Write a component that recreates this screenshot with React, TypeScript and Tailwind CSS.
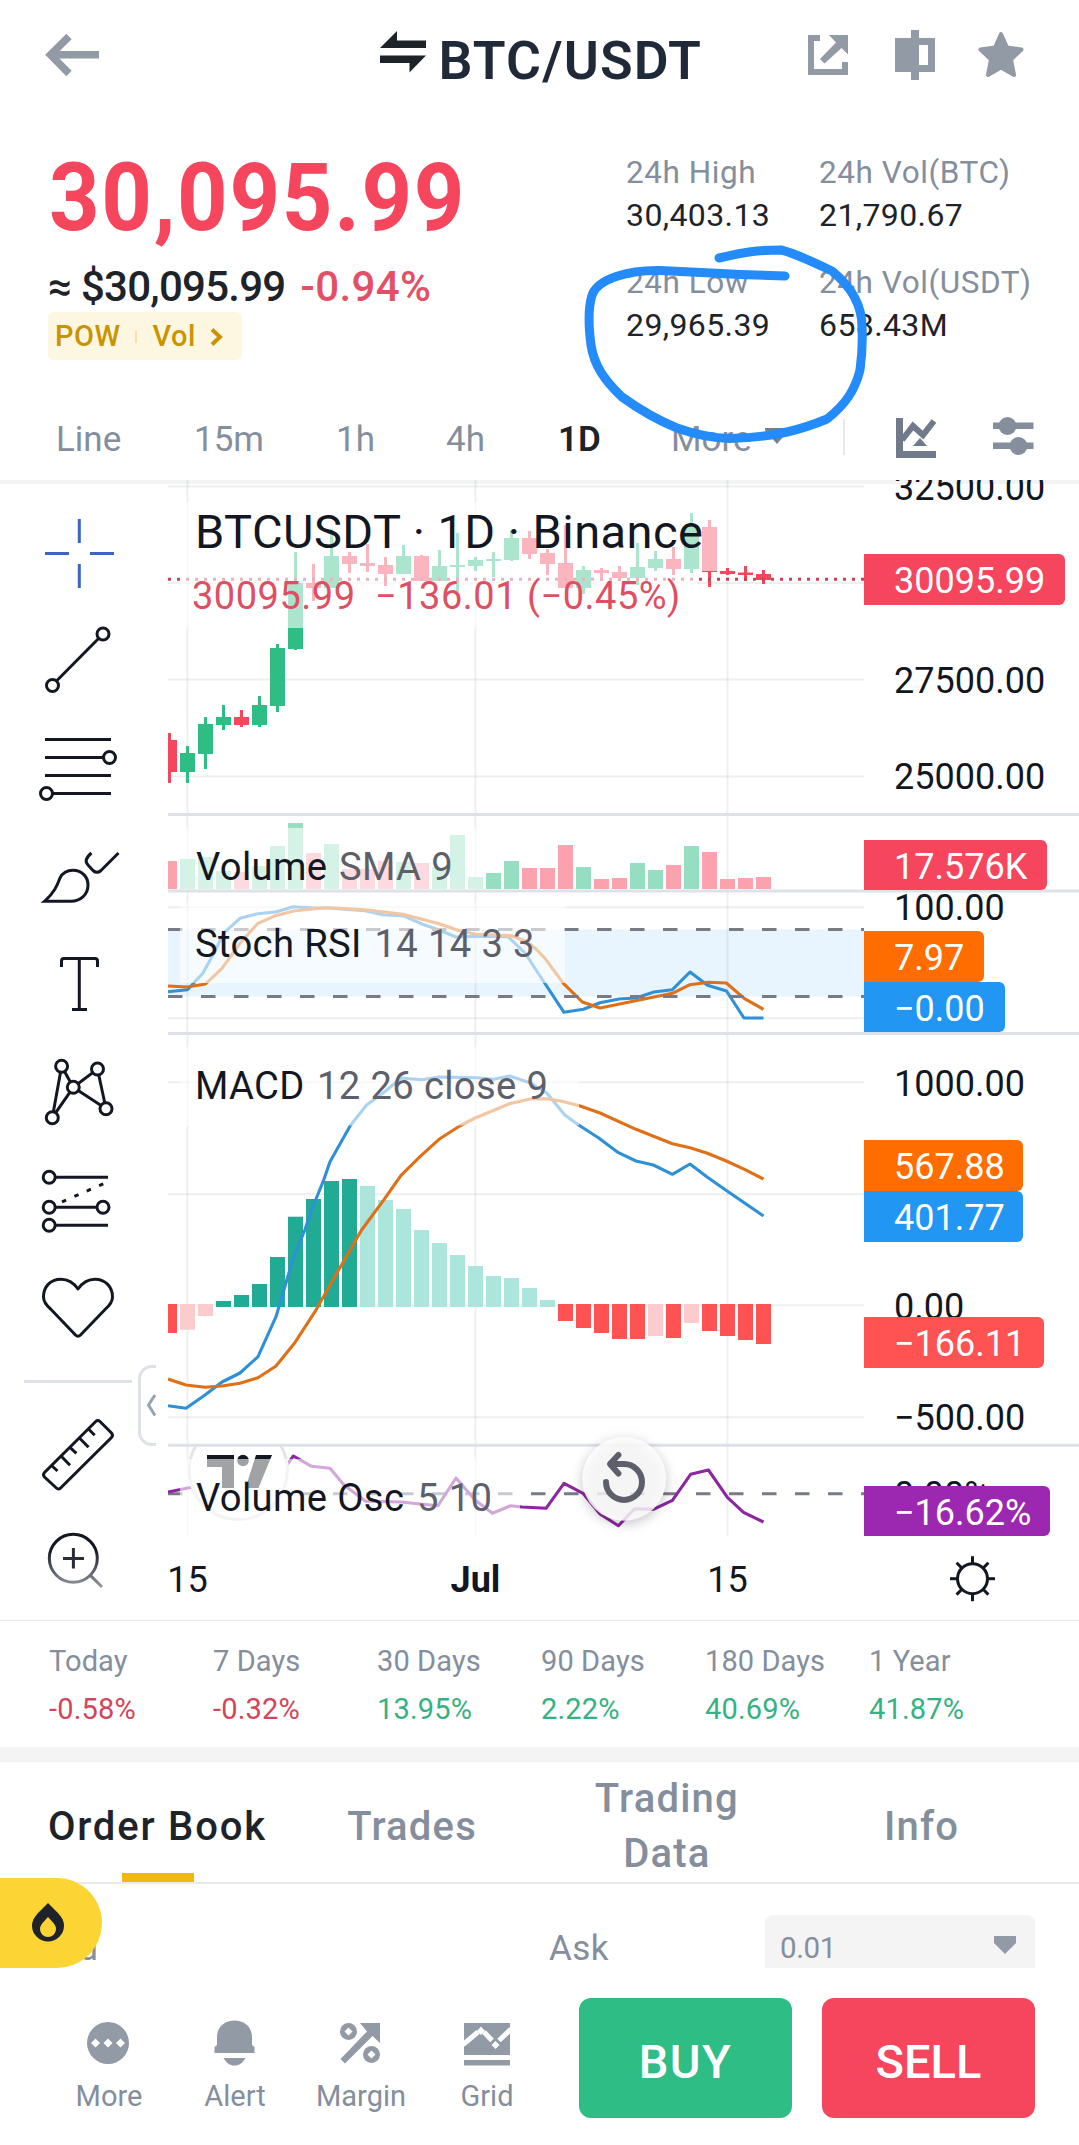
import React from "react";

type Candle = [number, number, number, number, 0 | 1];

// body top, body bottom, high, low, rising
const CANDLES: Candle[] = [
  [740, 772, 733, 783, 0],
  [753, 772, 746, 783, 1],
  [724, 754, 717, 769, 1],
  [717, 725, 705, 730, 1],
  [717, 725, 710, 727, 0],
  [705, 725, 696, 727, 1],
  [648, 706, 644, 712, 1],
  [583, 649, 552, 650, 1],
  [583, 588, 564, 601, 0],
  [556, 588, 529, 588, 1],
  [556, 564, 552, 573, 0],
  [563, 566, 544, 572, 0],
  [565, 574, 557, 586, 0],
  [556, 574, 545, 574, 1],
  [556, 581, 555, 581, 0],
  [566, 581, 550, 581, 1],
  [565, 567, 533, 592, 1],
  [560, 566, 557, 571, 1],
  [559, 561, 552, 577, 1],
  [538, 560, 530, 561, 1],
  [538, 554, 531, 559, 0],
  [553, 564, 549, 575, 0],
  [563, 588, 525, 588, 0],
  [570, 588, 566, 594, 1],
  [570, 573, 568, 581, 0],
  [572, 578, 566, 581, 0],
  [567, 578, 543, 585, 1],
  [559, 568, 551, 571, 1],
  [559, 569, 547, 575, 0],
  [527, 569, 513, 573, 1],
  [527, 572, 520, 587, 0],
  [571, 574, 568, 575, 0],
  [572.5, 575, 566, 581, 0],
  [574, 580, 570, 584, 0],
];

const VOLUME = [
  861, 859, 857, 871, 872, 866, 846, 823, 853, 844, 869, 869, 861, 862, 863, 867, 835, 877, 873, 861,
  868, 868, 845, 867, 879, 878, 863, 870, 865, 846, 852, 879, 878, 877,
];
// r = falling, g = rising
const VOLUME_DIR = "rgggrgggrgrrrgrggggg" + "rrrgrrggrgrrrr";

// value edge, shade: d/D = falling faint/strong, u/U = rising faint/strong
const MACD: [number, "U" | "u" | "D" | "d"][] = [
  [1333, "D"], [1329.7, "d"], [1316, "d"], [1301, "U"], [1295, "U"], [1284, "U"], [1257, "U"],
  [1216.7, "U"], [1199, "U"], [1181, "U"], [1179, "U"], [1186, "u"], [1200, "u"], [1209, "u"],
  [1230, "u"], [1243, "u"], [1255, "u"], [1266, "u"], [1276, "u"], [1278, "u"], [1288, "u"],
  [1300, "u"], [1321, "D"], [1328, "D"], [1333, "D"], [1339, "D"], [1339, "D"], [1336, "d"],
  [1338, "D"], [1323, "d"], [1331, "D"], [1336, "D"], [1340, "D"], [1344, "D"],
];
const SHADE = { U: "#22ab94", u: "#ace5dc", D: "#ff5252", d: "#fccbcd" };

const K_LINE =
  "168,991.7 187.5,989.7 203,973 214,953 223.8,933 240,918.3 257.5,913.7 275.5,912 293.5,906.7 313,908 327,908 365,910.7 384,915 403,915.7 422,924 439,930 456,937 482,936.3 508,936.7 525,953 540,976 564,1012.3 583.5,1009.3 600,1002.7 619,999 636,998 654,992 672.4,989.7 690,972 707.5,985.3 726.5,991 744,1018 763.5,1018";
const D_LINE =
  "168,986 187.5,987 205.5,984 222,968.3 240,943.3 257.5,923.7 275.5,915.7 293.5,911 320,908.3 330.6,907.7 365,909.7 403,914.3 439,923.7 458,930.3 475.5,934.3 511.5,935.7 527,941.7 537,950 545,958.3 563.4,983.3 582.3,1002 600,1008 672.4,993.3 690,984.7 708.4,982.3 726.3,983 744.5,998.7 763.5,1009.3";
const MACD_LINE =
  "168,1405.7 186,1408.3 205,1395 222,1382 240,1373 258,1356.7 276,1316.7 292.7,1260 304.8,1230 311.6,1210 323.7,1180 330,1161.7 350.5,1125.3 366.7,1105 385.7,1091 401,1078 422,1079.7 439,1077 477,1077.7 494,1079.3 509.6,1076 530,1082.7 547,1093.3 564.8,1115 579,1125.3 598.4,1137.7 618.4,1152.7 636,1161 653.4,1165 672.4,1174.3 690,1164 707.4,1177.3 726,1190.3 763.5,1216";
const SIGNAL_LINE =
  "168,1379 186,1385 205,1387.3 222,1386 240,1383.3 258,1377.7 276,1366 294.4,1343.3 315,1311.7 335.7,1275 361.6,1230 384,1199.7 401,1175.3 420,1156.7 439,1139.3 459.7,1126 475.2,1118 509.6,1103.7 530,1099 547,1098.7 560.6,1101 579.5,1105.7 600,1113 636,1129.3 672.4,1143.7 690,1147.7 707.4,1153.3 726.3,1161 744.5,1169.3 763.5,1179";
const OSC_LINE =
  "168,1492 193,1487 220,1482 275,1481 293.4,1456 311.6,1466.3 330,1468.3 344,1485 365.7,1501.3 401,1502 420,1504 438,1505.7 456,1478 475,1500 492.4,1513.3 510.7,1505.7 522,1507 546,1508.3 564,1483.3 583,1493.3 600,1514 618.4,1525.7 634.5,1508.7 653.4,1509.3 672.4,1500.3 690.6,1474.3 708.4,1470 727.4,1497.3 743.5,1512.3 763.5,1522";

const barX = (i: number) => 187.5 + 18 * (i - 1);

function Line({ points, color }: { points: string; color: string }) {
  return <polyline points={points} fill="none" stroke={color} strokeWidth="3.1" strokeLinejoin="round" />;
}

function Veil({ x = 180, y, w, h }: { x?: number; y: number; w: number; h: number }) {
  return <rect x={x} y={y} width={w} height={h} fill="#fff" fillOpacity="0.6" />;
}

function Tag({ y, w, h = 51, color, text }: { y: number; w: number; h?: number; color: string; text: string }) {
  return (
    <g>
      <path d={`M0 ${y}h${w - 6}a6 6 0 0 1 6 6v${h - 12}a6 6 0 0 1 -6 6h${-(w - 6)}z`} fill={color} />
      <text x="30" y={y + 39} fill="#fff">{text}</text>
    </g>
  );
}

function Chart() {
  return (
    <svg viewBox="168 480 696 1139" className="block h-[1139px] w-[696px] shrink-0">
      <g stroke="#131722" strokeOpacity="0.07" strokeWidth="2">
        {[187.5, 475.5, 727.5].map((x) => (
          <path key={x} d={`M${x} 480V1536`} />
        ))}
        {[486.5, 583, 679.5, 776.5, 907.3, 1018.3, 1082.3, 1194.3, 1305.3, 1417.3].map((y) => (
          <path key={y} d={`M168 ${y}H864`} />
        ))}
      </g>

      {CANDLES.map(([t, b, hi, lo, up], i) => (
        <g key={i} fill={up ? "#2ebd85" : "#f6465d"}>
          <rect x={barX(i) - 1.5} y={hi} width="3" height={lo - hi} />
          <rect x={barX(i) - 7.5} y={t} width="15" height={b - t} />
        </g>
      ))}
      <path d="M168 579.3H864" stroke="#cf3f55" strokeWidth="3" strokeDasharray="3 6" />
      <Veil y={502} w={540} h={69} />
      <Veil y={571} w={517} h={57} />

      {VOLUME.map((top, i) => (
        <rect key={i} x={barX(i) - 7.5} y={top} width="15" height={889 - top} fill={VOLUME_DIR[i] === "g" ? "#96dec2" : "#faa2ae"} />
      ))}
      <Veil y={828} w={305} h={62} />

      <rect x="168" y="929.5" width="696" height="67" fill="#2196f3" fillOpacity="0.1" />
      <Line points={K_LINE} color="#2e90d6" />
      <Line points={D_LINE} color="#e07018" />
      <path d="M168 929.5H864M168 996.5H864" stroke="#787b86" strokeWidth="3" strokeDasharray="14.5 18.5" />
      <Veil y={903} w={385} h={80} />

      {MACD.map(([v, s], i) => {
        const up = s === "U" || s === "u";
        return (
          <rect key={i} x={barX(i) - 7.5} y={up ? v : 1304} width="15" height={up ? 1307 - v : v - 1304} fill={SHADE[s]} />
        );
      })}
      <Line points={MACD_LINE} color="#2e90d6" />
      <Line points={SIGNAL_LINE} color="#e07018" />
      <Veil y={1047} w={399} h={78.5} />

      <path d="M168 1493.7H864" stroke="#787b86" strokeWidth="3" strokeDasharray="14.5 18.5" />
      <Line points={OSC_LINE} color="#8d26a0" />
      <clipPath id="osc-pane"><rect x="168" y="1446" width="696" height="90" /></clipPath>
      <g clipPath="url(#osc-pane)">
        <circle cx="238.3" cy="1470.5" r="49" fill="#fff" stroke="#e3e4e8" strokeWidth="3" />
        <path d="M207 1455H234V1488H222V1467H207ZM256 1455H272L258.5 1488H245.5Z" fill="#131722" />
        <circle cx="243" cy="1460.5" r="5.8" fill="#131722" />
      </g>
      <Veil y={1459} w={340} h={77} />

      <g stroke="#dee1e7" strokeWidth="3">
        {[814.5, 891, 1033.5, 1445.3].map((y) => (
          <path key={y} d={`M168 ${y}H864`} />
        ))}
      </g>

      <g fill="#131722" fontFamily="Roboto, sans-serif" fontSize="38.2">
        <text x="195" y="547.5" fontSize="47" className="tracking-[0.45px]">BTCUSDT · 1D · Binance</text>
        <g fill="#df4f63" fontSize="38" className="tracking-[0.5px]">
          <text x="192" y="608.5">30095.99</text>
          <text x="375" y="608.5">−136.01 (−0.45%)</text>
        </g>
        <g className="tracking-[0.35px]">
          <text x="196" y="879.7">Volume</text>
          <text x="339" y="879.7" fill="#5d606b">SMA 9</text>
          <text x="195" y="956.7">Stoch RSI</text>
          <text x="374.5" y="956.7" fill="#5d606b">14 14 3 3</text>
          <text x="195" y="1098.7">MACD</text>
          <text x="317" y="1098.7" fill="#5d606b">12 26 close 9</text>
          <text x="196" y="1510.7">Volume Osc</text>
          <text x="417" y="1510.7" fill="#5d606b">5 10</text>
        </g>
        <g fontSize="36" textAnchor="middle">
          <text x="187.5" y="1592">15</text>
          <text x="475.5" y="1592" fontWeight="700">Jul</text>
          <text x="727.5" y="1592">15</text>
        </g>
      </g>

      <circle cx="624.2" cy="1478.7" r="42" fill="#fff" fillOpacity="0.82" className="drop-shadow-[0_3px_6px_rgba(0,0,0,0.28)]" />
      <g fill="none" stroke="#5d606b" strokeWidth="6" strokeLinecap="round" strokeLinejoin="round">
        <path d="M606 1482A18 18 0 1 0 624 1464H611" />
        <path d="M618.4 1455L610 1464L618.4 1473.5" />
      </g>
    </svg>
  );
}

function PriceAxis() {
  return (
    <svg viewBox="0 480 215 1139" className="block h-[1139px] w-[215px] shrink-0" fontFamily="Roboto, sans-serif" fontSize="36" fill="#131722">
      <g stroke="#dee1e7" strokeWidth="3">
        {[814.5, 891, 1033.5, 1445.3].map((y) => (
          <path key={y} d={`M0 ${y}H215`} />
        ))}
      </g>
      <text x="30" y="499.7">32500.00</text>
      <text x="30" y="693">27500.00</text>
      <text x="30" y="789">25000.00</text>
      <text x="30" y="919.7">100.00</text>
      <text x="30" y="1095.7">1000.00</text>
      <text x="30" y="1318.5">0.00</text>
      <text x="30" y="1430">−500.00</text>
      <text x="30" y="1506.5">0.00%</text>
      <Tag y={554} w={201} color="#f6465d" text="30095.99" />
      <Tag y={840} w={183} h={50} color="#f6465d" text="17.576K" />
      <Tag y={931} w={120} color="#ff6d00" text="7.97" />
      <Tag y={982} w={141} h={50} color="#2196f3" text="−0.00" />
      <Tag y={1140} w={159} color="#ff6d00" text="567.88" />
      <Tag y={1191} w={159} color="#2196f3" text="401.77" />
      <Tag y={1317} w={180} color="#ff5252" text="−166.11" />
      <Tag y={1486} w={186} h={50} color="#9c27b0" text="−16.62%" />
      <g stroke="#131722" strokeWidth="3" fill="none">
        <circle cx="108.5" cy="1578.7" r="15" />
        {[0, 45, 90, 135, 180, 225, 270, 315].map((a) => (
          <path key={a} d="M108.5 1563.7V1556.2" transform={`rotate(${a} 108.5 1578.7)`} />
        ))}
      </g>
    </svg>
  );
}

function Dot({ x, y }: { x: number; y: number }) {
  return <circle cx={x} cy={y} r="6" fill="#fff" />;
}

const toolSvg = "block w-[136px] shrink-0 fill-none stroke-[#131722] stroke-3";

function Toolbar() {
  return (
    <div className="relative flex w-[168px] shrink-0 flex-col">
      <svg viewBox="0 480 136 127" className={`${toolSvg} h-[127px]`}>
        <path d="M79.3 519V543M79.3 564V588M45 553.5H69M90 553.5H114" stroke="#3a66c2" />
      </svg>
      <svg viewBox="0 607 136 105" className={`${toolSvg} h-[105px]`}>
        <path d="M103 634L52.5 685" />
        <Dot x={103} y={634} />
        <Dot x={52.5} y={685.5} />
      </svg>
      <svg viewBox="0 712 136 108" className={`${toolSvg} h-[108px]`}>
        <path d="M45 739.5H111M45 757.5H105M45 775.5H111M50 793.5H111" />
        <Dot x={109.5} y={757.5} />
        <Dot x={46.5} y={793.5} />
      </svg>
      <svg viewBox="0 820 136 110" className={`${toolSvg} h-[110px]`}>
        <path d="M44.5 901.3C54 893 57 886 60 878C63 872 67 870.3 73 870.3C82 870.3 88 877 88 885C88 895 80 901.3 71 901.3Z" />
        <path d="M118.5 853L101 870.5Q97 874 93 870.5L88 865Q83 860 91.5 853" />
      </svg>
      <svg viewBox="0 930 136 105" className={`${toolSvg} h-[105px]`}>
        <path d="M61.5 967V961Q61.5 958.5 64 958.5H95Q97.5 958.5 97.5 961V967M79.3 958.5V1009.5M72 1009.5H87" />
      </svg>
      <svg viewBox="0 1035 136 107" className={`${toolSvg} h-[107px]`}>
        <path d="M61.6 1066.3L73.3 1087.3L97.5 1069L106 1108.7L73.3 1087.3L52.3 1117.7Z" />
        <Dot x={61.6} y={1066.3} />
        <Dot x={97.5} y={1069} />
        <Dot x={73.3} y={1087.3} />
        <Dot x={106} y={1108.7} />
        <Dot x={52.3} y={1117.7} />
      </svg>
      <svg viewBox="0 1142 136 108" className={`${toolSvg} h-[108px]`}>
        <path d="M49 1177.3H108M49 1207.3H103M49 1225.3H108" />
        <path d="M62 1201.8L104 1183.5" strokeDasharray="4.5 9" />
        <Dot x={49.2} y={1177.3} />
        <Dot x={49.2} y={1207.3} />
        <Dot x={103} y={1207.3} />
        <Dot x={49.2} y={1225.3} />
      </svg>
      <svg viewBox="0 1250 136 124" className={`${toolSvg} h-[124px]`}>
        <path d="M78 1289C73 1282 67 1279.3 61 1279.3C50 1279.3 43.5 1287 43.5 1297C43.5 1302 46 1305 50.6 1309L75.5 1335Q78 1337.5 80.5 1335L105.5 1309C110 1305 112.5 1302 112.5 1297C112.5 1287 105.5 1279.3 95 1279.3C89 1279.3 83 1282 78 1289Z" strokeLinejoin="round" />
      </svg>
      <div className="mt-1.5 ml-6 h-[3px] w-[108px] bg-[#dee1e7]" />
      <svg viewBox="0 1383 136 127" className={`${toolSvg} h-[127px]`}>
        <path d="M95.7 1421.5Q97.8 1419.5 100 1421.5L111.5 1433Q113.5 1435.5 111.5 1437.5L60.6 1488Q58.5 1490 56.4 1488L44.5 1477Q42.5 1474.7 44.5 1472.5Z" />
        <path d="M51 1465L57.5 1471M61 1456L70 1465.3M70.2 1447.7L76.4 1453.3M79.2 1437.7L88.5 1447.3M88.5 1429L94.7 1435.3" />
      </svg>
      <svg viewBox="0 1510 136 109" className={`${toolSvg} h-[109px]`}>
        <defs>
          <linearGradient id="fade" gradientUnits="userSpaceOnUse" x1="0" y1="1550" x2="0" y2="1590">
            <stop offset="0" stopColor="#131722" />
            <stop offset="1" stopColor="#a0a2a8" />
          </linearGradient>
        </defs>
        <g stroke="url(#fade)">
          <circle cx="73.3" cy="1558.3" r="24" />
          <path d="M90.6 1575.6L102 1587" />
          <path d="M63 1558.4H84M73.4 1548V1568.5" stroke="#2a2e38" />
        </g>
      </svg>
      <svg viewBox="136 1362 22 86" className="absolute top-[882px] left-[136px] h-[86px] w-[22px] fill-none stroke-3">
        <path d="M156 1366.5H152A12.5 12.5 0 0 0 139.5 1379V1432A12.5 12.5 0 0 0 152 1444.5H156" stroke="#dee1e7" />
        <path d="M155 1395L148.5 1405L155 1415.5" stroke="#97a3ad" />
      </svg>
    </div>
  );
}

function Header() {
  return (
    <header className="relative flex h-[113px] items-center justify-center">
      <svg viewBox="44 32 58 46" className="absolute top-8 left-11 h-[46px] w-[58px]" fill="none" stroke="#929aa5" strokeWidth="7.5">
        <path d="M99 54.8H51M69 36.5L50.5 54.8L69 73.5" />
      </svg>
      <div className="flex w-[320px] items-center gap-[11px]">
        <svg viewBox="380 32 48 46" className="mb-[9px] h-[46px] w-[48px] shrink-0" fill="#1e2329">
          <path d="M380 51L397 34V43.5H426V51ZM426 58.5L409.500 75.5V66H380V58.5Z" />
        </svg>
        <h1 className="mt-[9px] text-[53.5px] leading-none font-semibold tracking-[1.1px] text-[#1f2937]">BTC/USDT</h1>
      </div>
      <svg viewBox="804 28 222 54" className="absolute top-[28px] left-[804px] h-[54px] w-[222px]" fill="#929aa5">
        <path d="M808 35H820V41H814V69H842V62H848V75H808ZM829 35H848V54.500L841.500 48L824.5 63.500L820 59L836 42.500Z" />
        <path d="M895 38H911V30H919V38H935V72H919V80H911V72H895ZM919 45V65H928V45Z" fillRule="evenodd" />
        <path d="M1001 34L1007 47.500L1021.500 49.500L1011 59.500L1014 75L1001 67.500L988 75L991 59.500L980.500 49.500L995 47.500Z" stroke="#929aa5" strokeWidth="4" strokeLinejoin="round" />
      </svg>
    </header>
  );
}

function Stat({ label, value }: { label: string; value: string }) {
  return (
    <div className="h-[110px] whitespace-nowrap">
      <div className="h-[43px] text-[31.5px] leading-[43px] tracking-[0.55px] text-[#848e9c]">{label}</div>
      <div className="h-[43px] text-[32px] leading-[43px] tracking-[0.4px] text-[#1e2329]">{value}</div>
    </div>
  );
}

function Summary() {
  return (
    <section className="flex h-[289px] pl-12">
      <div className="w-[578px]">
        <div className="mt-[35px] h-[100px] origin-left scale-x-[0.93] pl-px text-[95px] leading-[100px] font-bold tracking-[1.8px] whitespace-nowrap text-[#f6465d]">
          30,095.99
        </div>
        <div className="mt-[16px] flex h-[46px] items-center gap-[15px] text-[42px] leading-none font-medium whitespace-nowrap">
          <span className="tracking-[-0.75px] text-[#1e2329]">≈ $30,095.99</span>
          <span className="tracking-[0.4px] text-[#e25066]">-0.94%</span>
        </div>
        <div className="mt-[2px] flex h-[48px] w-[194px] items-center rounded-md bg-[#fdf7e2] pt-px pl-[7px] text-[29px] font-medium tracking-[0.5px] text-[#c99400]">
          <span>POW</span>
          <span className="ml-[14px] h-3 w-[2px] bg-[#f3e2a9]" />
          <span className="ml-4">Vol</span>
          <svg viewBox="0 0 14 18" className="ml-[14px] h-[18px] w-[14px] fill-none stroke-[#c99400] stroke-4">
            <path d="M2 1.500L10 9L2 16.500" />
          </svg>
        </div>
      </div>
      <div className="grid w-[430px] grid-cols-[193px_1fr] content-start pt-[38px]">
        <Stat label="24h High" value="30,403.13" />
        <Stat label="24h Vol(BTC)" value="21,790.67" />
        <Stat label="24h Low" value="29,965.39" />
        <Stat label="24h Vol(USDT)" value="658.43M" />
      </div>
    </section>
  );
}

function Intervals() {
  return (
    <nav className="flex h-[78px] items-center pl-[56px] text-[35px] leading-none whitespace-nowrap text-[#848e9c]">
      <span className="mb-1 w-[138px]">Line</span>
      <span className="mb-1 w-[142px]">15m</span>
      <span className="mb-1 w-[110px]">1h</span>
      <span className="mb-1 w-[112px]">4h</span>
      <span className="mb-1 w-[113px] font-semibold text-[#1e2329]">1D</span>
      <span className="mb-1 w-[94px]">More</span>
      <svg viewBox="0 0 24 16" className="mb-2.5 h-4 w-6 fill-[#76808f]"><path d="M0 0H24V2L12 16L0 2Z" /></svg>
      <span className="mb-2 ml-[54px] h-9 w-[2px] bg-[#e6e8ea]" />
      <svg viewBox="896 416 40 41" className="mb-2 ml-[51px] h-[41px] w-10 shrink-0" fill="#707a8a">
        <path d="M896 417H903V450H936V457H896Z" />
        <path d="M902 439L913 425L923 434L934 420" fill="none" stroke="#707a8a" strokeWidth="6" />
        <path d="M920 437L927 445H913Z" />
      </svg>
      <svg viewBox="993 416 41 39" className="mb-2.5 ml-[57px] h-[39px] w-[41px] shrink-0" fill="#848e9c">
        <path d="M993 421.500H1033.500V428H993ZM993 441.500H1033.500V448H993Z" />
        <circle cx="1007.500" cy="425" r="9" />
        <circle cx="1018.500" cy="445" r="9" />
      </svg>
    </nav>
  );
}

const PERIODS: [string, string, boolean][] = [
  ["Today", "-0.58%", false],
  ["7 Days", "-0.32%", false],
  ["30 Days", "13.95%", true],
  ["90 Days", "2.22%", true],
  ["180 Days", "40.69%", true],
  ["1 Year", "41.87%", true],
];

function Performance() {
  return (
    <section className="flex h-[142px] border-t border-b-[15px] border-t-[#e6e7e9] border-b-[#f4f4f4] pl-[49px]">
      {PERIODS.map(([label, value, up]) => (
        <div key={label} className="w-[164px] shrink-0 pt-[16px] whitespace-nowrap">
          <div className="text-[29px] leading-[48px] tracking-[0.1px] text-[#848e9c]">{label}</div>
          <div className={up ? "text-[29px] leading-[48px] tracking-[0.2px] text-[#35b283]" : "text-[29px] leading-[48px] tracking-[0.2px] text-[#d3455b]"}>
            {value}
          </div>
        </div>
      ))}
    </section>
  );
}

function OrderTabs() {
  return (
    <nav className="grid h-[122px] grid-cols-4 items-center border-b-2 border-[#e9eaec] px-[30px] text-center text-[40px] leading-[55px] font-medium tracking-[1.2px] text-[#848e9c]">
      <div className="relative flex h-full items-center justify-center pt-[9px] tracking-[1.8px] whitespace-nowrap text-[#1e2329]">
        Order Book
        <span className="absolute bottom-0 left-[92px] h-[9px] w-[72px] bg-[#f0b90b]" />
      </div>
      <div className="pt-[9px]">Trades</div>
      <div className="px-10 pt-[8px]">Trading Data</div>
      <div className="pt-[9px]">Info</div>
    </nav>
  );
}

function OrderBook() {
  return (
    <section className="relative flex h-[84px] overflow-hidden text-[35px] text-[#848e9c]">
      <span className="mt-[45px] ml-12 w-[501px] leading-[40px]">Bid</span>
      <span className="mt-[45px] w-[216px] leading-[40px] tracking-[0.4px]">Ask</span>
      <div className="mt-[31px] flex h-[70px] w-[270px] shrink-0 justify-between rounded-lg bg-[#f4f4f4] pr-[19px] pl-[15px] text-[29.5px]">
        <span className="mt-[13px] h-10 leading-10 tracking-[-0.4px]">0.01</span>
        <svg viewBox="0 0 22 18" className="mt-[21px] h-[18px] w-[22px] fill-[#929aa5]"><path d="M0 0H22V7L11 18L0 7Z" /></svg>
      </div>
    </section>
  );
}

const FOOTER = [
  {
    label: "More",
    icon: (
      <>
        <circle cx="22" cy="24" r="21" />
        <path d="M9.500 19.500L14 24L9.500 28.500L5 24ZM22 19.500L26.500 24L22 28.500L17.500 24ZM34.500 19.500L39 24L34.500 28.500L30 24Z" fill="#fff" />
      </>
    ),
  },
  {
    label: "Alert",
    icon: <path d="M2.500 34V28L5 26V18C5 8 12.500 1.500 22.500 1.500S40 8 40 18V26L42.500 28V34ZM11.500 39H33.500C30.500 44 27.500 46.500 22.500 46.500S14.500 44 11.500 39Z" />,
  },
  {
    label: "Margin",
    icon: (
      <>
        <circle cx="10.500" cy="12.500" r="8.500" />
        <circle cx="33.500" cy="35.500" r="8.500" />
        <path d="M10.500 8.500L14.500 12.500L10.500 16.500L6.500 12.500ZM33.500 31.500L37.500 35.500L33.500 39.500L29.500 35.500Z" fill="#fff" />
        <path d="M22 4H42V24L34.500 17L7 44.500L2.500 40L29 12.500Z" />
      </>
    ),
  },
  {
    label: "Grid",
    icon: (
      <>
        <path d="M0 4H46V36H0ZM0 41H46V46.500H0Z" />
        <path d="M-1 25.500L14 13M20 13L28 21.500M35 21.500L47 10" stroke="#fff" strokeWidth="5" />
        <path d="M17 7.500L21 12L17 16L13 12ZM31.500 22L35.500 26L31.500 30L27.500 26Z" fill="#fff" />
      </>
    ),
  },
];

function Footer() {
  return (
    <footer className="flex h-[177px] pt-[30px] pl-[46px]">
      <div className="flex w-[533px]">
        {FOOTER.map(({ label, icon }) => (
          <div key={label} className="flex w-[126px] flex-col items-center pt-[21px]">
            <svg viewBox="0 0 46 48" className="h-12 w-[46px] overflow-hidden fill-[#929aa5]">{icon}</svg>
            <span className="mt-[9px] text-[29px] leading-[40px] text-[#848e9c]">{label}</span>
          </div>
        ))}
      </div>
      <button className="h-[120px] w-[213px] rounded-xl bg-[#2ebd85] pt-2 text-[47px] font-medium tracking-[1.5px] text-white">BUY</button>
      <button className="ml-[30px] h-[120px] w-[213px] rounded-xl bg-[#f6465d] pt-2 text-[47px] font-medium text-white">SELL</button>
    </footer>
  );
}

export default function App() {
  return (
    <main className="relative h-[2145px] w-[1079px] overflow-hidden bg-white font-['Roboto',sans-serif]">
      <Header />
      <Summary />
      <Intervals />
      <section className="relative flex h-[1140px]">
        <Toolbar />
        <Chart />
        <PriceAxis />
        <div className="absolute inset-x-0 top-0 h-1 bg-[#131722]/5" />
      </section>
      <Performance />
      <OrderTabs />
      <OrderBook />
      <Footer />

      <div className="absolute top-[1878px] left-0 h-[90px] w-[102px] rounded-r-full bg-[#fcd535]">
        <svg viewBox="0 0 32 39" className="mt-[25px] ml-8 h-[39px] w-8 fill-[#1e2329]" fillRule="evenodd">
          <path d="M16 0L26 10C30 14.500 32 18 32 22.500A16 16 0 0 1 0 22.500C0 18 2 14.500 6 10ZM16 14L11 19.500C9 22 8 23.500 8 26A8 8 0 0 0 24 26C24 23.500 23 22 21 19.500Z" />
        </svg>
      </div>

      <svg viewBox="580 240 290 210" className="absolute top-[240px] left-[580px] h-[210px] w-[290px] fill-none stroke-[#238bfa] stroke-[9]" strokeLinecap="round" strokeLinejoin="round">
        <path d="M719 258C745 252 757 250 781 250C795 253 815 263 832 271C848 284 862 303 862 327C863 345 862 355 860 370C855 390 846 404 827 419C815 424 800 429 787 432C765 437 750 438 730 438.500C710 438 694 434 677 428C655 419 640 410 622 397C604 380 594 365 591 345C589 330 588 310 591.500 297C596 278 630 270 660 270.500C690 272 712 273 740 274.500L785 276" />
      </svg>
    </main>
  );
}
